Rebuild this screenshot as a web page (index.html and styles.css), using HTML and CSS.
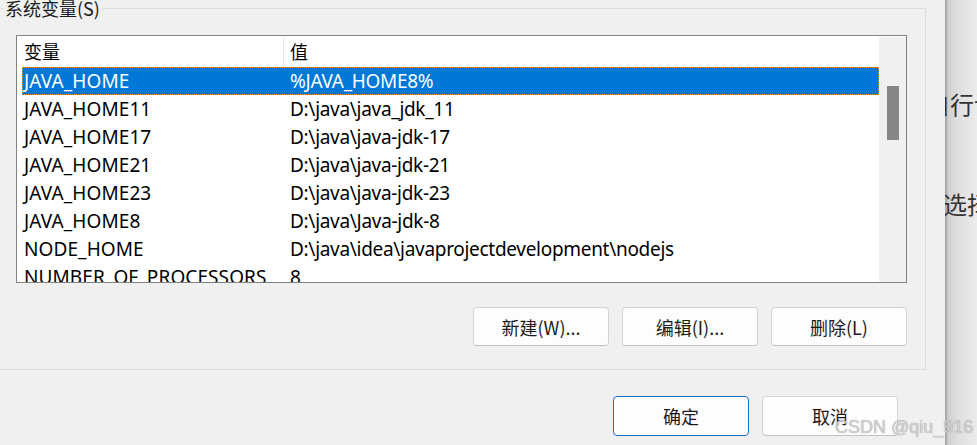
FILE: index.html
```html
<!DOCTYPE html>
<html lang="zh-CN">
<head>
<meta charset="utf-8">
<title>系统变量</title>
<link rel="stylesheet" href="styles.css">
</head>
<body>
<div class="screen">
  <div class="dialog">
    <div class="group">
      <div class="legend">系统变量(S)</div>
      <div class="listbox">
        <div class="list-main">
          <div class="list-head">
            <div class="hcell name">变量</div>
            <div class="hcell value">值</div>
          </div>
          <div class="row selected"><span class="c1">JAVA_HOME</span><span class="c2">%JAVA_HOME8%</span></div>
          <div class="row"><span class="c1">JAVA_HOME11</span><span class="c2">D:\java\java_jdk_11</span></div>
          <div class="row"><span class="c1">JAVA_HOME17</span><span class="c2">D:\java\java-jdk-17</span></div>
          <div class="row"><span class="c1">JAVA_HOME21</span><span class="c2">D:\java\java-jdk-21</span></div>
          <div class="row"><span class="c1">JAVA_HOME23</span><span class="c2">D:\java\java-jdk-23</span></div>
          <div class="row"><span class="c1">JAVA_HOME8</span><span class="c2">D:\java\Java-jdk-8</span></div>
          <div class="row"><span class="c1">NODE_HOME</span><span class="c2">D:\java\idea\javaprojectdevelopment\nodejs</span></div>
          <div class="row"><span class="c1">NUMBER_OF_PROCESSORS</span><span class="c2">8</span></div>
        </div>
        <div class="scrollbar"><div class="thumb"></div></div>
      </div>
      <div class="btnrow">
        <button class="btn">新建(W)...</button>
        <button class="btn">编辑(I)...</button>
        <button class="btn">删除(L)</button>
      </div>
    </div>
    <div class="footer">
      <button class="btn tall primary">确定</button>
      <button class="btn tall">取消</button>
    </div>
  </div>
  <div class="behind">
    <div class="bt t1">自行设置</div>
    <div class="bt t2">选择</div>
  </div>
  <div class="watermark">CSDN @qiu_916</div>
</div>
</body>
</html>
```
FILE: styles.css
```css
body {
  margin: 0;
  background: #f0f0f0;
  font-family: "Noto Sans", "Noto Sans CJK SC", sans-serif;
  color: #000;
}

.screen {
  position: relative;
  display: flex;
  width: 977px;
  height: 445px;
  overflow: hidden;
}

.dialog {
  flex: none;
  width: 945px;
  display: flex;
  flex-direction: column;
  background: #f0f0f0;
}

.group {
  box-sizing: border-box;
  width: 936px;
  margin: 8px 0 0 -10px;
  border: 1px solid #dcdcdc;
  padding: 0 18px 23px 25px;
}

.legend {
  width: max-content;
  height: 20px;
  margin: -11px 0 0 -13px;
  padding: 0 2px;
  background: #f0f0f0;
  font-family: "Noto Sans CJK SC", sans-serif;
  font-size: 18px;
  line-height: 20px;
  color: #1a1a1a;
}

.listbox {
  box-sizing: border-box;
  display: flex;
  height: 248px;
  margin-top: 17px;
  border: 1px solid #828282;
  background: #fff;
}

.list-main {
  box-sizing: border-box;
  width: 862px;
  padding-left: 5px;
  overflow: hidden;
}

.list-head {
  display: flex;
  align-items: center;
  height: 31px;
  font-family: "Noto Sans CJK SC", sans-serif;
  font-size: 18px;
}

.hcell {
  box-sizing: border-box;
  height: 29px;
  line-height: 29px;
}

.hcell.name {
  width: 262px;
  padding-left: 2px;
  border-right: 1px solid #e5e5e5;
}

.hcell.value {
  padding-left: 6px;
}

.row {
  box-sizing: border-box;
  display: flex;
  align-items: center;
  height: 28px;
  border: 1px solid transparent;
  font-size: 19px;
  white-space: nowrap;
}

.row .c1 {
  box-sizing: border-box;
  width: 267px;
  padding-left: 1px;
  letter-spacing: 0.1px;
}

.row .c2 {
  letter-spacing: -0.3px;
}

.row.selected {
  background: #0078d7;
  color: #fff;
  border: 1px dotted #f39a1e;
}

.scrollbar {
  flex: 1;
  box-sizing: border-box;
  background: #f0f0f0;
  border-top: 1px solid #fff;
  padding-top: 49px;
}

.thumb {
  width: 12px;
  height: 54px;
  margin-left: 8px;
  background: #868686;
}

.btnrow {
  display: flex;
  justify-content: flex-end;
  gap: 13px;
  margin-top: 24px;
}

.btn {
  box-sizing: border-box;
  width: 136px;
  height: 39px;
  padding: 0;
  border: 1px solid #d4d4d4;
  border-bottom-color: #c2c2c2;
  border-radius: 4px;
  background: #fdfdfd;
  font-family: "Noto Sans CJK SC", sans-serif;
  font-size: 18px;
  color: #1b1b1b;
}

.btn.tall {
  height: 40px;
}

.btn.primary {
  border: 1px solid #1a6fc4;
}

.footer {
  display: flex;
  justify-content: flex-end;
  gap: 13px;
  margin-top: 26px;
  padding-right: 47px;
}

.behind {
  flex: 1;
  overflow: hidden;
  background: linear-gradient(to right, #a2a2a2 0, #b4b4b4 2px, #cfcfcf 3px, #dedede 12px, #ececec 100%);
  font-family: "Noto Sans CJK SC", sans-serif;
  font-size: 24px;
  line-height: 30px;
  color: #333;
  white-space: nowrap;
}

.bt.t1 {
  margin: 89px 0 0 -19px;
}

.bt.t2 {
  margin: 70px 0 0 -2px;
}

.watermark {
  position: absolute;
  left: 835px;
  top: 417px;
  font-family: "Liberation Sans", Arial, sans-serif;
  font-size: 18px;
  line-height: 20px;
  color: rgba(214, 214, 214, 0.92);
  text-shadow: 0 0 1px rgba(120, 120, 120, 0.8);
  white-space: nowrap;
}
```
